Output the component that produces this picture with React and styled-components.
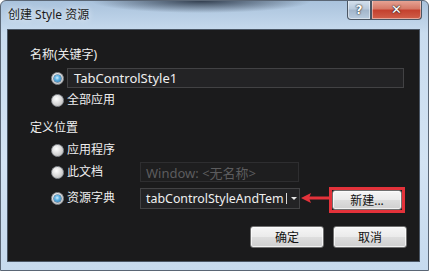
import styled, { createGlobalStyle } from 'styled-components';

const GlobalStyle = createGlobalStyle`
  html, body { margin: 0; padding: 0; background: #ffffff; }
  body { font-family: "Noto Sans", "Noto Sans CJK SC", sans-serif; font-size: 12px; }
`;

const Window = styled.div`
  width: 429px;
  height: 271px;
  box-sizing: border-box;
  display: flex;
  flex-direction: column;
  border: 1px solid #5a6675;
  border-radius: 6px 6px 0 0;
  background: linear-gradient(180deg, #a9c2dc 0%, #c9dcef 12%, #d3e3f3 60%, #c6daee 100%);
  overflow: hidden;
`;

const TitleBar = styled.div`
  height: 28px;
  flex: none;
  display: flex;
  align-items: flex-start;
  justify-content: space-between;
  padding-left: 7px;
  background: radial-gradient(ellipse 110px 12px at 200px 0px, rgba(30, 40, 55, 0.85), rgba(30, 40, 55, 0) 100%);
`;

const TitleText = styled.div`
  margin-top: 6px;
  color: #1b1b1b;
  font-size: 12px;
  line-height: 16px;
  text-shadow: 0 0 6px rgba(255, 255, 255, 0.9);
`;

const CaptionButtons = styled.div`
  display: flex;
  margin-right: 6px;
  margin-top: -1px;
`;

const CaptionButton = styled.div`
  height: 20px;
  width: ${p => p.$w}px;
  box-sizing: border-box;
  display: flex;
  align-items: center;
  justify-content: center;
  border: 1px solid #4b5663;
  border-top: none;
  border-radius: ${p => p.$r};
  color: #ffffff;
  font-family: "DejaVu Sans", sans-serif;
  font-weight: bold;
  font-size: ${p => p.$fs}px;
  text-shadow: 0 0 2px #222, 0 0 1px #222;
  background: ${p => p.$red
    ? 'linear-gradient(180deg, #e8a899 0%, #d67a68 45%, #c4412f 55%, #d0604a 100%)'
    : 'linear-gradient(180deg, #d7e3ef 0%, #b9cadc 45%, #a3b6cb 55%, #b8cbde 100%)'};
  box-shadow: inset 0 0 0 1px rgba(255, 255, 255, 0.45);
`;

const Client = styled.div`
  flex: 1;
  margin: 0 8px 8px 6px;
  background: #1b1b1c;
  border: 1px solid #4a5665;
  display: flex;
  flex-direction: column;
  padding: 17px 12px 0 22px;
  color: #efefef;
  font-size: 12px;
`;

const GroupLabel = styled.div`
  height: 16px;
  line-height: 16px;
  margin-top: ${p => p.$top || 0}px;
`;

const Row = styled.div`
  display: flex;
  align-items: center;
  padding-left: 21px;
  height: ${p => p.$h || 16}px;
  margin-top: ${p => p.$top || 0}px;
`;

const Radio = styled.span`
  width: 13px;
  height: 13px;
  flex: none;
  box-sizing: border-box;
  border-radius: 50%;
  border: 1px solid #8d9196;
  background: radial-gradient(circle at 40% 35%, #ffffff 0%, #e2e2e2 40%, #b3b3b3 100%);
  position: relative;
  margin-right: 3px;

  ${p => p.$checked && `
    &::after {
      content: "";
      position: absolute;
      left: 2px;
      top: 2px;
      width: 7px;
      height: 7px;
      border-radius: 50%;
      background: radial-gradient(circle at 45% 40%, #d6f1ff 0%, #5fb3e4 40%, #1f6ea8 100%);
      box-shadow: 0 0 0 0.5px #1c4f7a;
    }
  `}
`;

const OptionLabel = styled.span`
  line-height: 16px;
  width: ${p => (p.$w ? `${p.$w}px` : 'auto')};
  flex: none;
`;

const TextField = styled.div`
  box-sizing: border-box;
  height: ${p => p.$h || 20}px;
  width: ${p => p.$w}px;
  flex: none;
  display: flex;
  align-items: center;
  padding-left: ${p => p.$pl || 5}px;
  border: 1px solid ${p => (p.$disabled ? '#2e2e30' : '#424244')};
  background: ${p => (p.$disabled ? '#1e1e1f' : '#232325')};
  color: ${p => (p.$disabled ? '#5c5c5e' : '#efefef')};
  font-size: ${p => p.$fs || 12}px;
  white-space: nowrap;
`;

const ComboText = styled.span`
  flex: 1;
  white-space: nowrap;
  display: flex;
  align-items: center;
  font-size: 12.4px;
`;

const Caret = styled.span`
  width: 1px;
  height: 11px;
  margin-left: 2px;
  background: #d8d8d8;
`;

const ComboArrow = styled.span`
  width: 14px;
  flex: none;
  display: flex;
  align-items: center;
  justify-content: center;
  &::before {
    content: "";
    border-left: 3px solid transparent;
    border-right: 3px solid transparent;
    border-top: 3px solid #e6e6e6;
  }
`;

const Pointer = styled.svg`
  flex: none;
  display: block;
`;

const Highlight = styled.div`
  box-sizing: border-box;
  width: 76px;
  height: 26px;
  flex: none;
  border: 3px solid #e3323a;
  display: flex;
  margin-top: 4px;
`;

const PushButton = styled.div`
  box-sizing: border-box;
  width: ${p => (p.$w ? `${p.$w}px` : '100%')};
  height: ${p => (p.$h ? `${p.$h}px` : '100%')};
  flex: none;
  display: flex;
  align-items: center;
  justify-content: center;
  border: 1px solid #707070;
  border-radius: 3px;
  background: linear-gradient(180deg, #f6f6f6 0%, #ebebeb 48%, #dddddd 52%, #cfcfcf 100%);
  box-shadow: inset 0 0 0 1px rgba(255, 255, 255, 0.7);
  color: #111111;
  font-size: 12px;
`;

const ButtonRow = styled.div`
  display: flex;
  justify-content: flex-end;
  gap: 9px;
  margin-top: 15px;
`;

function App() {
  return (
    <>
      <GlobalStyle />
      <Window>
        <TitleBar>
          <TitleText>创建 Style 资源</TitleText>
          <CaptionButtons>
            <CaptionButton $w={24} $fs={12} $r="0 0 0 4px">?</CaptionButton>
            <CaptionButton $w={51} $fs={13} $red $r="0 0 4px 0">✕</CaptionButton>
          </CaptionButtons>
        </TitleBar>
        <Client>
          <GroupLabel>名称(关键字)</GroupLabel>
          <Row $h={20} $top={5}>
            <Radio $checked />
            <TextField $w={337} $pl={6} $fs={13}>TabControlStyle1</TextField>
          </Row>
          <Row $top={4}>
            <Radio />
            <OptionLabel>全部应用</OptionLabel>
          </Row>
          <GroupLabel $top={12}>定义位置</GroupLabel>
          <Row $top={6}>
            <Radio />
            <OptionLabel>应用程序</OptionLabel>
          </Row>
          <Row $h={20} $top={4}>
            <Radio />
            <OptionLabel $w={73}>此文档</OptionLabel>
            <TextField $w={159} $disabled $fs={13}>Window: &lt;无名称&gt;</TextField>
          </Row>
          <Row $h={26} $top={3}>
            <Radio $checked />
            <OptionLabel $w={73}>资源字典</OptionLabel>
            <TextField $w={160} $h={21} $fs={13}>
              <ComboText>tabControlStyleAndTem<Caret /></ComboText>
              <ComboArrow />
            </TextField>
            <Pointer width="29" height="12" viewBox="0 0 29 12">
              <path d="M29 6 L9 6" stroke="#e3323a" strokeWidth="3" />
              <path d="M1 6 L11 1 L9 6 L11 11 Z" fill="#e3323a" />
            </Pointer>
            <Highlight>
              <PushButton>新建...</PushButton>
            </Highlight>
          </Row>
          <ButtonRow>
            <PushButton $w={74} $h={22}>确定</PushButton>
            <PushButton $w={74} $h={22}>取消</PushButton>
          </ButtonRow>
        </Client>
      </Window>
    </>
  );
}

export default App;
